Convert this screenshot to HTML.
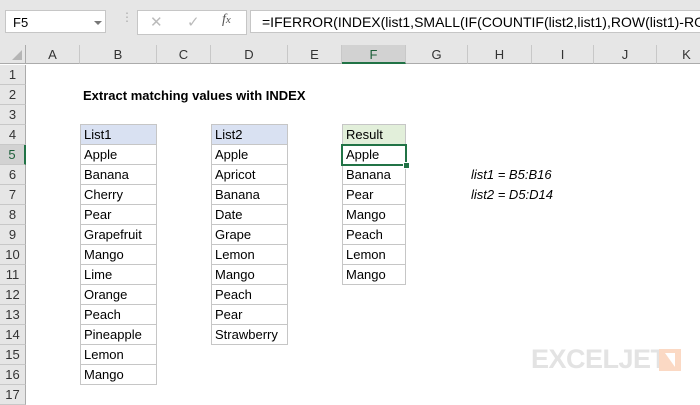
<!DOCTYPE html><html><head><style>
body{margin:0;width:700px;height:400px;overflow:hidden;background:#fff;font-family:"Liberation Sans",sans-serif;position:relative}
.a{position:absolute}
.top{left:0;top:0;width:700px;height:45px;background:#e6e6e6}
.box{background:#fff;border:1px solid #c6c6c6;height:23px;top:10px}
.ch{top:45px;height:19px;background:#e6e6e6;border-right:1px solid #c8c8c8;border-bottom:1px solid #ababab;font-size:13px;text-align:center;line-height:19px;color:#333;box-sizing:border-box}
.rh{left:0;width:26px;height:20px;background:#e6e6e6;border-bottom:1px solid #c8c8c8;border-right:1px solid #ababab;font-size:13px;text-align:center;line-height:20px;color:#333;box-sizing:border-box}
.c{height:21px;border:1px solid #c6c6c6;margin-top:-1px;box-sizing:border-box;font-size:13px;line-height:20px;padding-left:3px;color:#000}
</style></head><body>
<div class="a top"></div>
<div class="a box" style="left:5px;font-size:13px;line-height:23px;padding-left:7px;box-sizing:border-box;width:101px">F5<span style="position:absolute;left:88px;top:10px;border:4px solid transparent;border-top:4px solid #777;width:0;height:0"></span></div>
<div class="a" style="left:121px;top:15px;color:#aaa;font-size:12px;line-height:5px">⋮</div>
<div class="a box" style="left:137px;width:108px"></div>
<div class="a" style="left:150px;top:13px;color:#bbb;font-size:15px">✕</div>
<div class="a" style="left:187px;top:13px;color:#bbb;font-size:15px">✓</div>
<div class="a" style="left:222px;top:12px;color:#555;font-size:14px;font-family:'Liberation Serif',serif;font-style:italic">f<span style="font-size:11px">x</span></div>
<div class="a box" style="left:250px;width:460px;font-size:14px;line-height:23px;padding-left:11px;box-sizing:border-box;white-space:nowrap;overflow:hidden">=IFERROR(INDEX(list1,SMALL(IF(COUNTIF(list2,list1),ROW(list1)-ROW(INDEX(list1,1,1))+1),ROWS($F$5:F5))),"")</div>
<div class="a" style="left:0;top:45px;width:26px;height:19px;background:#e6e6e6;border-right:1px solid #ababab;border-bottom:1px solid #ababab;box-sizing:border-box"><div style="position:absolute;right:3px;bottom:3px;border-left:10px solid transparent;border-bottom:10px solid #b5b5b5;width:0;height:0"></div></div>
<div class="a ch" style="left:26px;width:54px">A</div>
<div class="a ch" style="left:80px;width:77px">B</div>
<div class="a ch" style="left:157px;width:54px">C</div>
<div class="a ch" style="left:211px;width:77px">D</div>
<div class="a ch" style="left:288px;width:54px">E</div>
<div class="a ch" style="left:342px;width:64px;background:#d2d2d2;border-bottom:2px solid #217346;color:#1d5f3a">F</div>
<div class="a ch" style="left:406px;width:62px">G</div>
<div class="a ch" style="left:468px;width:64px">H</div>
<div class="a ch" style="left:532px;width:62px">I</div>
<div class="a ch" style="left:594px;width:63px">J</div>
<div class="a ch" style="left:657px;width:60px">K</div>
<div class="a rh" style="top:65px">1</div><div class="a rh" style="top:85px">2</div><div class="a rh" style="top:105px">3</div><div class="a rh" style="top:125px">4</div>
<div class="a rh" style="top:145px;background:#d2d2d2;border-right:2px solid #217346;color:#1d5f3a">5</div>
<div class="a rh" style="top:165px">6</div><div class="a rh" style="top:185px">7</div><div class="a rh" style="top:205px">8</div><div class="a rh" style="top:225px">9</div><div class="a rh" style="top:245px">10</div><div class="a rh" style="top:265px">11</div><div class="a rh" style="top:285px">12</div><div class="a rh" style="top:305px">13</div><div class="a rh" style="top:325px">14</div><div class="a rh" style="top:345px">15</div><div class="a rh" style="top:365px">16</div><div class="a rh" style="top:385px">17</div>
<div class="a" style="left:83px;top:88px;font-size:13px;font-weight:bold">Extract matching values with INDEX</div>
<div class="a" style="left:80px;top:125px;width:77px">
<div class="c" style="background:#d9e1f2">List1</div><div class="c">Apple</div><div class="c">Banana</div><div class="c">Cherry</div><div class="c">Pear</div><div class="c">Grapefruit</div><div class="c">Mango</div><div class="c">Lime</div><div class="c">Orange</div><div class="c">Peach</div><div class="c">Pineapple</div><div class="c">Lemon</div><div class="c">Mango</div></div>
<div class="a" style="left:211px;top:125px;width:77px">
<div class="c" style="background:#d9e1f2">List2</div><div class="c">Apple</div><div class="c">Apricot</div><div class="c">Banana</div><div class="c">Date</div><div class="c">Grape</div><div class="c">Lemon</div><div class="c">Mango</div><div class="c">Peach</div><div class="c">Pear</div><div class="c">Strawberry</div></div>
<div class="a" style="left:342px;top:125px;width:64px">
<div class="c" style="background:#e2efda">Result</div><div class="c">Apple</div><div class="c">Banana</div><div class="c">Pear</div><div class="c">Mango</div><div class="c">Peach</div><div class="c">Lemon</div><div class="c">Mango</div></div>
<div class="a" style="left:341px;top:144px;width:66px;height:22px;border:2px solid #217346;box-sizing:border-box"></div>
<div class="a" style="left:403px;top:162px;width:5px;height:5px;background:#217346;border:1px solid #fff"></div>
<div class="a" style="left:471px;top:167px;font-size:13px;font-style:italic">list1 = B5:B16</div>
<div class="a" style="left:471px;top:187px;font-size:13px;font-style:italic">list2 = D5:D14</div>
<div class="a" style="left:531px;top:344px;font-size:27px;font-weight:bold;color:#e3e3e3;letter-spacing:-0.5px">EXCELJET</div>
<div class="a" style="left:659px;top:349px;width:22px;height:22px;background:#fbd9c4"><div style="position:absolute;left:6px;top:4px;border-right:10px solid #fff;border-bottom:14px solid transparent;width:0;height:0"></div></div>
</body></html>
